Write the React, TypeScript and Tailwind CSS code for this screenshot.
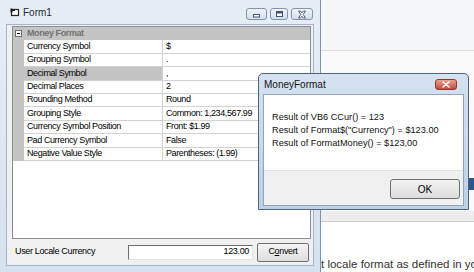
import React from "react";

const rows: { name: string; value: string; selected?: boolean }[] = [
  { name: "Currency Symbol", value: "$" },
  { name: "Grouping Symbol", value: "." },
  { name: "Decimal Symbol", value: ",", selected: true },
  { name: "Decimal Places", value: "2" },
  { name: "Rounding Method", value: "Round" },
  { name: "Grouping Style", value: "Common: 1,234,567.99" },
  { name: "Currency Symbol Position", value: "Front: $1.99" },
  { name: "Pad Currency Symbol", value: "False" },
  { name: "Negative Value Style", value: "Parentheses: (1.99)" },
];

function CaptionButton({ kind, w }: { kind: "min" | "max" | "close"; w: string }) {
  return (
    <div
      className={`${w} flex h-[12px] items-center justify-center rounded-[3px] border border-[#8193ad] bg-gradient-to-b from-[#f1f5fa] to-[#d3deeb]`}
    >
      {kind === "min" && (
        <svg width="9" height="7" viewBox="0 0 9 7">
          <rect x="1.5" y="3.5" width="6" height="2.5" fill="#fff" stroke="#44546c" strokeWidth="1" />
        </svg>
      )}
      {kind === "max" && (
        <svg width="9" height="8" viewBox="0 0 9 8">
          <rect x="1.5" y="1.5" width="6" height="5" fill="#fff" stroke="#44546c" strokeWidth="1" />
          <rect x="2" y="2" width="5" height="1.5" fill="#44546c" />
        </svg>
      )}
      {kind === "close" && (
        <svg width="10" height="9" viewBox="0 0 10 9">
          <path
            d="M1.5 1 L3.5 1 L5 2.8 L6.5 1 L8.5 1 L6.2 4.5 L8.5 8 L6.5 8 L5 6.2 L3.5 8 L1.5 8 L3.8 4.5 Z"
            fill="#fff"
            stroke="#44546c"
            strokeWidth="0.9"
            strokeLinejoin="round"
          />
        </svg>
      )}
    </div>
  );
}

export default function App() {
  return (
    <div className="relative h-[272px] w-[474px] overflow-hidden bg-white font-['Liberation_Sans',Arial,sans-serif]">
      {/* background web page */}
      <div className="flex h-full flex-col pl-[321px]">
        <div className="h-[51px] border-b border-[#dcdee2] bg-[#f6f7f9]" />
        <div className="flex h-[160px] justify-end bg-[#fafafa] pt-[127px]">
          <div className="h-[12px] w-[8px] bg-[#2d5690]" />
        </div>
        <div className="h-[11px] border-b border-[#cacaca] bg-[#ececec]" />
        <div className="flex-1 whitespace-nowrap bg-white pt-[35px] text-[11.5px] leading-[14px] text-[#333]">
          t locale format as defined in your
        </div>
      </div>

      {/* Form1 window */}
      <div className="absolute left-0 top-0 flex h-[272px] w-[321px] flex-col border-r border-[#7d92ad] bg-gradient-to-b from-[#e6edf5] to-[#d6e2ef] px-[6px] pb-[6px]">
        <div className="flex h-[24px] items-center pl-[4px] pr-[1px]">
          <svg width="10" height="9" viewBox="0 0 10 9" className="mr-[3px]">
            <rect x="1.5" y="1.5" width="7" height="6" fill="#fff" stroke="#222" strokeWidth="1.2" />
            <rect x="1" y="1" width="4" height="2" fill="#222" />
            <rect x="0.5" y="0.5" width="2" height="4" fill="#222" />
          </svg>
          <span className="text-[10px] text-[#1f2a3a]">Form1</span>
          <div className="ml-auto mt-[4px] flex gap-[3px]">
            <CaptionButton kind="min" w="w-[21px]" />
            <CaptionButton kind="max" w="w-[18px]" />
            <CaptionButton kind="close" w="w-[22px]" />
          </div>
        </div>

        <div className="flex flex-1 flex-col border border-[#a3b5cc] bg-[#f0f0f0] pl-[5px] pr-[2px] pt-[1px]">
          {/* property grid */}
          <div className="flex h-[213px] flex-col border border-[#8a8f96] bg-white text-[9px] tracking-[-0.4px] text-black">
            <div className="flex h-[13.4px] shrink-0 items-center bg-[#c4c4c4]">
              <div className="flex w-[11px] justify-center">
                <div className="flex h-[7px] w-[7px] items-center justify-center border border-[#6e6e6e] bg-white">
                  <div className="h-[1px] w-[3px] bg-black" />
                </div>
              </div>
              <span className="pl-[3px] font-bold text-[#727272]">Money Format</span>
            </div>
            {rows.map((r) => (
              <div key={r.name} className="flex h-[13.4px] shrink-0">
                <div className="w-[11px] bg-[#c4c4c4]" />
                <div
                  className={`flex w-[139px] items-center border-b border-r border-[#d2d2d2] pl-[3px] ${
                    r.selected ? "bg-[#c4c4c4]" : "bg-white"
                  }`}
                >
                  {r.name}
                </div>
                <div className="flex flex-1 items-center border-b border-[#d2d2d2] pl-[3px]">{r.value}</div>
              </div>
            ))}
          </div>

          {/* bottom row */}
          <div className="flex h-[26px] items-center text-[9px] tracking-[-0.35px] text-black">
            <div className="w-[116px] pl-[3px]">User Locale Currency</div>
            <div className="flex h-[15px] w-[125px] items-center justify-end border border-b-[#e3e3e3] border-l-[#6d6d6d] border-r-[#e3e3e3] border-t-[#6d6d6d] bg-white pr-[3px]">
              123.00
            </div>
            <div className="ml-[4px] flex h-[19px] w-[52px] items-center justify-center rounded-[2px] border border-[#707070] bg-gradient-to-b from-[#f4f4f4] to-[#dedede]">
              C<span className="underline">o</span>nvert
            </div>
          </div>
        </div>
      </div>

      {/* MoneyFormat dialog */}
      <div className="absolute left-[258px] top-[73px] flex h-[137px] w-[211px] flex-col rounded-t-[5px] border border-[#4d6480] bg-gradient-to-b from-[#d5e2f1] to-[#bfd0e6] px-[4px] pb-[3px]">
        <div className="flex h-[20px] shrink-0 items-center justify-between pl-[1px] pr-[7px]">
          <span className="text-[10px] text-[#141414]">MoneyFormat</span>
          <div className="flex h-[11px] w-[22px] items-center justify-center rounded-[3px] border border-[#8a3b30] bg-gradient-to-b from-[#e9a192] to-[#c54a36]">
            <svg width="8" height="7" viewBox="0 0 8 7">
              <path d="M1 1 L7 6 M7 1 L1 6" stroke="#fff" strokeWidth="1.6" strokeLinecap="round" />
            </svg>
          </div>
        </div>
        <div className="flex flex-1 flex-col border border-[#8fa3bc]">
          <div className="flex h-[75px] flex-col bg-white pl-[8px] pt-[16px] text-[9.2px] leading-[13px] text-[#111]">
            <div>Result of VB6 CCur() = 123</div>
            <div>Result of Format$("Currency") = $123.00</div>
            <div>Result of FormatMoney() = $123,00</div>
          </div>
          <div className="flex flex-1 justify-end border-t border-[#e2e2e2] bg-[#f0f0f0] pr-[3px] pt-[8px]">
            <div className="flex h-[20px] w-[70px] items-center justify-center rounded-[3px] border border-[#707070] bg-gradient-to-b from-[#f3f3f3] to-[#dcdcdc] text-[10px] text-black">
              OK
            </div>
          </div>
        </div>
      </div>
    </div>
  );
}
